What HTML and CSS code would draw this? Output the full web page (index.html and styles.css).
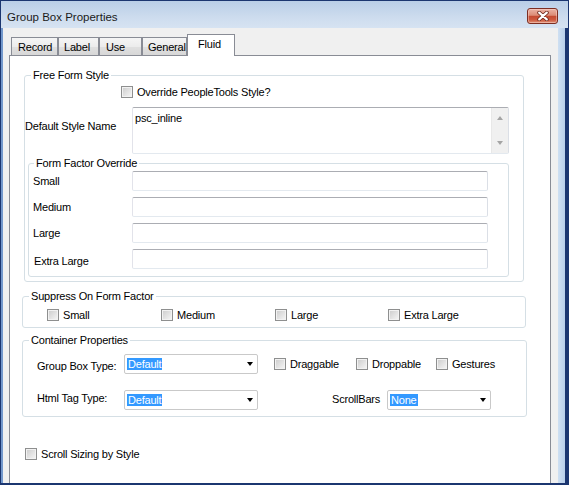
FILE: index.html
```html
<!DOCTYPE html>
<html>
<head>
<meta charset="utf-8">
<title>Group Box Properties</title>
<link rel="stylesheet" href="styles.css">
</head>
<body>
<div class="window">
  <div class="titlebar">
    <span class="title">Group Box Properties</span>
    <div class="close">
      <svg width="12" height="10" viewBox="0 0 12 10">
        <path d="M2.2 1.6 L9.8 8.4 M9.8 1.6 L2.2 8.4" stroke="#6b2418" stroke-width="3.8" stroke-linecap="round" fill="none"/>
        <path d="M2.2 1.6 L9.8 8.4 M9.8 1.6 L2.2 8.4" stroke="#ffffff" stroke-width="2.2" stroke-linecap="round" fill="none"/>
      </svg>
    </div>
  </div>
  <div class="main">
    <div class="lframe"></div>
    <div class="client">
      <div class="tabs">
        <div class="tab tab-record">Record</div>
        <div class="tab tab-label">Label</div>
        <div class="tab tab-use">Use</div>
        <div class="tab tab-general">General</div>
        <div class="tab tab-fluid is-active">Fluid</div>
      </div>
      <div class="panel">
        <div class="group group-freeform">
          <div class="group-title">Free Form Style</div>
          <div class="check check-override"><span class="box"></span><span>Override PeopleTools Style?</span></div>
          <div class="style-row">
            <span class="style-label">Default Style Name</span>
            <div class="textarea">
              <span class="ta-text">psc_inline</span>
              <div class="vscroll"><span class="arr-up"></span><span class="arr-down"></span></div>
            </div>
          </div>
          <div class="group group-ff">
            <div class="group-title group-title-ff">Form Factor Override</div>
            <div class="ff-row"><span class="ff-label">Small</span><span class="input"></span></div>
            <div class="ff-row"><span class="ff-label">Medium</span><span class="input"></span></div>
            <div class="ff-row"><span class="ff-label">Large</span><span class="input"></span></div>
            <div class="ff-row"><span class="ff-label ff-label-xl">Extra Large</span><span class="input"></span></div>
          </div>
        </div>

        <div class="group group-suppress">
          <div class="group-title">Suppress On Form Factor</div>
          <div class="suppress-row">
            <div class="check"><span class="box"></span><span>Small</span></div>
            <div class="check"><span class="box"></span><span>Medium</span></div>
            <div class="check"><span class="box"></span><span>Large</span></div>
            <div class="check"><span class="box"></span><span>Extra Large</span></div>
          </div>
        </div>

        <div class="group group-container">
          <div class="group-title">Container Properties</div>
          <div class="cp-row cp-row-1">
            <span class="cp-label cp-label-gbt">Group Box Type:</span>
            <div class="select select-wide"><span class="select-value">Default</span><span class="caret"></span></div>
            <div class="cp-checks">
              <div class="check"><span class="box"></span><span>Draggable</span></div>
              <div class="check"><span class="box"></span><span>Droppable</span></div>
              <div class="check"><span class="box"></span><span>Gestures</span></div>
            </div>
          </div>
          <div class="cp-row cp-row-2">
            <span class="cp-label cp-label-html">Html Tag Type:</span>
            <div class="select select-wide"><span class="select-value">Default</span><span class="caret"></span></div>
            <span class="sb-label">ScrollBars</span>
            <div class="select select-narrow"><span class="select-value">None</span><span class="caret"></span></div>
          </div>
        </div>

        <div class="check check-scroll"><span class="box"></span><span>Scroll Sizing by Style</span></div>
      </div>
    </div>
    <div class="rframe"></div>
  </div>
</div>
</body>
</html>
```
FILE: styles.css
```css
html, body {
  margin: 0;
  padding: 0;
  background: #ffffff;
}

body {
  font-family: "Liberation Sans", Arial, sans-serif;
  font-size: 11px;
  letter-spacing: -0.2px;
  color: #000;
}

.window {
  width: 569px;
  height: 485px;
  box-sizing: border-box;
  border: 1px solid #1b3670;
  border-bottom-width: 2px;
  display: flex;
  flex-direction: column;
  background: #c4d8ee;
}

/* Title bar */
.titlebar {
  flex: none;
  height: 27px;
  display: flex;
  align-items: flex-start;
  padding: 0 10px 0 6px;
  background: linear-gradient(#b9cee7, #cddcee 60%, #d6e3f2);
}

.title {
  margin-top: 9px;
  line-height: 14px;
  font-size: 11.5px;
  letter-spacing: 0;
  color: #1a1a1a;
}

.close {
  margin-left: auto;
  margin-top: 7px;
  width: 31px;
  height: 16px;
  box-sizing: border-box;
  border: 1px solid #7d2e22;
  border-radius: 3px;
  background: linear-gradient(#eab2a4 0%, #dc8c76 45%, #c54a31 52%, #cd5a3f 78%, #e0957b 100%);
  box-shadow: inset 0 0 0 1px rgba(255, 220, 210, 0.45);
  display: flex;
  align-items: center;
  justify-content: center;
}

/* Frame */
.main {
  flex: 1;
  display: flex;
  min-height: 0;
}

.lframe {
  width: 2px;
  background: #7398cc;
}

.rframe {
  width: 10px;
  background: linear-gradient(to right, #cfe0f2 0, #b8cfea 7px, #1b3670 7px);
}

.client {
  flex: 1;
  background: #f0f0f0;
  padding: 6px 7px 0 6px;
  display: flex;
  flex-direction: column;
}

/* Tabs */
.tabs {
  display: flex;
  align-items: flex-end;
  height: 21px;
  padding-left: 2px;
  flex: none;
}

.tab {
  box-sizing: border-box;
  height: 18px;
  border: 1px solid #898c95;
  border-bottom: none;
  padding: 2px 0 0 6px;
  line-height: 14px;
  background: linear-gradient(#f5f5f5 0%, #ececec 50%, #e0e0e0 51%, #d7d7d7 100%);
  white-space: nowrap;
}

.tab-record { width: 47px; }
.tab-label { width: 41px; padding-left: 5px; }
.tab-use { width: 43px; }
.tab-general { width: 45px; padding-left: 5px; }

.tab.is-active {
  width: 48px;
  height: 22px;
  margin-bottom: -1px;
  padding: 2px 0 0 10px;
  background: #ffffff;
  position: relative;
  z-index: 1;
}

/* Panel */
.panel {
  flex: 1;
  background: #ffffff;
  border: 1px solid #898c95;
  border-bottom: none;
  display: flex;
  flex-direction: column;
  align-items: flex-start;
}

/* Group boxes */
.group {
  box-sizing: border-box;
  border: 1px solid #d5dfe5;
  border-radius: 3px;
  display: flex;
  flex-direction: column;
  align-items: flex-start;
}

.group-title {
  margin: -8px 0 0 6px;
  padding: 0 2px;
  line-height: 14px;
  background: #ffffff;
  white-space: nowrap;
}

.group-title-ff {
  margin-left: 5px;
}

.group-freeform {
  margin: 19px 0 0 14px;
  width: 500px;
  padding-bottom: 4px;
}

.group-ff {
  margin: 9px 0 0 3px;
  width: 481px;
  padding-bottom: 7px;
}

.group-suppress {
  margin: 14px 0 0 12px;
  width: 504px;
  padding-bottom: 5px;
}

.group-container {
  margin: 12px 0 0 12px;
  width: 505px;
  padding-bottom: 6px;
}

/* Checkboxes */
.check {
  display: flex;
  align-items: center;
  gap: 4px;
  line-height: 14px;
  white-space: nowrap;
}

.box {
  flex: none;
  width: 12px;
  height: 12px;
  box-sizing: border-box;
  border: 1px solid #8e8f8f;
  background: linear-gradient(135deg, #cbcbcb, #f7f7f7);
  box-shadow: inset 0 0 0 1px #f2f2f2;
}

.check-override {
  margin: 3px 0 0 96px;
}

.check-scroll {
  margin: 30px 0 0 15px;
}

/* Default style name */
.style-row {
  display: flex;
  margin-top: 8px;
}

.style-label {
  width: 107px;
  padding-top: 12px;
  line-height: 14px;
  white-space: nowrap;
}

.textarea,
.input {
  box-sizing: border-box;
  border: 1px solid;
  border-color: #abadb3 #dbdfe6 #e3e9ef #e2e3ea;
  border-radius: 2px;
  background: #ffffff;
}

.textarea {
  width: 377px;
  height: 47px;
  display: flex;
}

.ta-text {
  flex: 1;
  padding: 3px 0 0 2px;
  line-height: 14px;
}

.vscroll {
  width: 17px;
  background: #f0f0f0;
  border-left: 1px solid #e8e8e8;
  display: flex;
  flex-direction: column;
  justify-content: space-between;
  align-items: center;
  padding: 8px 0 8px;
  box-sizing: border-box;
}

.arr-up {
  width: 0;
  height: 0;
  border-left: 3.5px solid transparent;
  border-right: 3.5px solid transparent;
  border-bottom: 4px solid #a4a4a4;
}

.arr-down {
  width: 0;
  height: 0;
  border-left: 3.5px solid transparent;
  border-right: 3.5px solid transparent;
  border-top: 4px solid #a4a4a4;
}

/* Form factor override */
.ff-row {
  display: flex;
  align-items: center;
  height: 20px;
  margin-top: 1px;
}

.ff-row + .ff-row {
  margin-top: 6px;
}

.ff-label {
  width: 99px;
  margin-left: 4px;
  line-height: 14px;
  white-space: nowrap;
}

.ff-label-xl {
  margin-left: 5px;
  width: 98px;
  padding-top: 3px;
}

.input {
  display: block;
  width: 356px;
  height: 20px;
}

/* Suppress */
.suppress-row {
  display: grid;
  grid-template-columns: 114px 114px 113px auto;
  margin: 5px 0 0 24px;
}

/* Container properties */
.cp-row {
  display: flex;
  align-items: center;
  height: 20px;
}

.cp-row-1 {
  margin-top: 7px;
}

.cp-row-2 {
  margin-top: 16px;
}

.cp-label {
  width: 87px;
  margin-left: 14px;
  line-height: 14px;
  white-space: nowrap;
}

.cp-label-gbt {
  padding-top: 3px;
}

.cp-label-html {
  padding-bottom: 5px;
}

.cp-checks {
  display: grid;
  grid-template-columns: 82px 80px auto;
  margin-left: 16px;
}

.sb-label {
  width: 55px;
  margin-left: 74px;
  padding-bottom: 2px;
  line-height: 14px;
  white-space: nowrap;
}

.select {
  box-sizing: border-box;
  height: 20px;
  border: 1px solid #c9c9c9;
  border-radius: 2px;
  background: #ffffff;
  display: flex;
  align-items: center;
  justify-content: space-between;
  padding: 0 4px 0 2px;
}

.select-wide {
  width: 134px;
}

.select-narrow {
  width: 104px;
}

.select-value {
  background: #3399ff;
  color: #ffffff;
  line-height: 12px;
  height: 12px;
  padding: 0 1px;
  white-space: nowrap;
}

.caret {
  width: 0;
  height: 0;
  border-left: 3.5px solid transparent;
  border-right: 3.5px solid transparent;
  border-top: 4px solid #000000;
}
```
